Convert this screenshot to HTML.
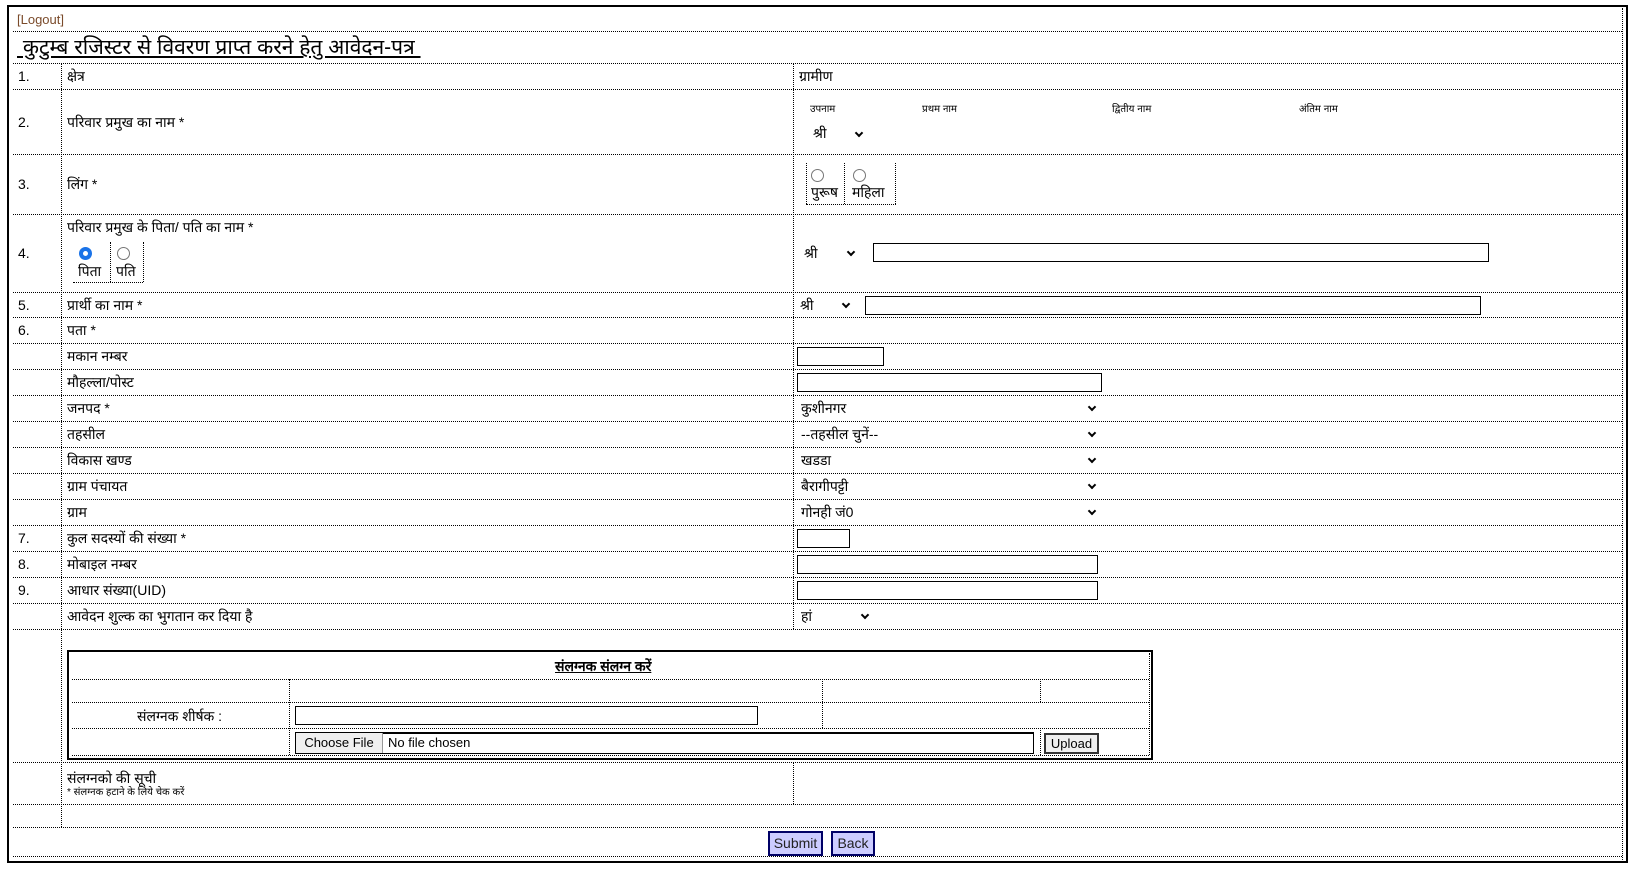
<!DOCTYPE html>
<html><head><meta charset="utf-8">
<style>
*{margin:0;padding:0;box-sizing:border-box}
body{width:1638px;height:869px;background:#fff;font-family:"Liberation Sans","Noto Sans CJK SC",sans-serif;font-size:14px;color:#000;position:relative;overflow:hidden}
.a{position:absolute;white-space:nowrap}
.h{position:absolute;border-top:1px dotted #000;height:0}
.v{position:absolute;border-left:1px dotted #000;width:0}
.t{position:absolute;white-space:nowrap;line-height:18px}
.inp{position:absolute;border:1px solid #000;background:#fff}
.chev{position:absolute;width:6px;height:6px;border-right:2px solid #000;border-bottom:2px solid #000;transform:rotate(45deg);margin-top:2px}
.rad{position:absolute;width:13px;height:13px;border:1px solid #777;border-radius:50%;background:#fff}
.btn{position:absolute;background:#ccccff;border:2px solid #000066;font-size:14px;text-align:center;line-height:20px;color:#222}
</style></head><body>
<div class="a" style="left:7px;top:5px;width:1621px;height:858px;border:2px solid #000"></div>
<div class="v" style="left:1622px;top:8px;height:852px"></div>
<div class="t" style="left:17px;top:11px;font-size:13px;color:#7a4a2a">[Logout]</div>
<div class="t" style="left:17px;top:35px;font-size:21px;line-height:26px;text-decoration:underline">&nbsp;कुटुम्ब रजिस्टर से विवरण प्राप्त करने हेतु आवेदन-पत्र&nbsp;</div>

<div class="h" style="left:13px;width:1609px;top:31px"></div>
<div class="h" style="left:13px;width:1609px;top:63px"></div>
<div class="h" style="left:13px;width:1609px;top:89px"></div>
<div class="h" style="left:13px;width:1609px;top:154px"></div>
<div class="h" style="left:13px;width:1609px;top:214px"></div>
<div class="h" style="left:13px;width:1609px;top:292px"></div>
<div class="h" style="left:13px;width:1609px;top:317px"></div>
<div class="h" style="left:13px;width:1609px;top:343px"></div>
<div class="h" style="left:13px;width:1609px;top:369px"></div>
<div class="h" style="left:13px;width:1609px;top:395px"></div>
<div class="h" style="left:13px;width:1609px;top:421px"></div>
<div class="h" style="left:13px;width:1609px;top:447px"></div>
<div class="h" style="left:13px;width:1609px;top:473px"></div>
<div class="h" style="left:13px;width:1609px;top:499px"></div>
<div class="h" style="left:13px;width:1609px;top:525px"></div>
<div class="h" style="left:13px;width:1609px;top:551px"></div>
<div class="h" style="left:13px;width:1609px;top:577px"></div>
<div class="h" style="left:13px;width:1609px;top:603px"></div>
<div class="h" style="left:13px;width:1609px;top:629px"></div>
<div class="h" style="left:13px;width:1609px;top:762px"></div>
<div class="h" style="left:13px;width:1609px;top:804px"></div>
<div class="h" style="left:13px;width:1609px;top:827px"></div>
<div class="h" style="left:13px;width:1609px;top:856px"></div>
<div class="v" style="left:61px;top:63px;height:764px"></div>
<div class="v" style="left:793px;top:63px;height:566px"></div>
<div class="v" style="left:793px;top:762px;height:42px"></div>

<div class="t" style="left:18px;top:67px">1.</div>
<div class="t" style="left:18px;top:113px">2.</div>
<div class="t" style="left:18px;top:175px">3.</div>
<div class="t" style="left:18px;top:244px">4.</div>
<div class="t" style="left:18px;top:296px">5.</div>
<div class="t" style="left:18px;top:321px">6.</div>
<div class="t" style="left:18px;top:529px">7.</div>
<div class="t" style="left:18px;top:555px">8.</div>
<div class="t" style="left:18px;top:581px">9.</div>

<div class="t" style="left:67px;top:67px">क्षेत्र</div>
<div class="t" style="left:67px;top:113px">परिवार प्रमुख का नाम *</div>
<div class="t" style="left:67px;top:175px">लिंग *</div>
<div class="t" style="left:67px;top:218px">परिवार प्रमुख के पिता/ पति का नाम *</div>
<div class="t" style="left:67px;top:296px">प्रार्थी का नाम *</div>
<div class="t" style="left:67px;top:321px">पता *</div>
<div class="t" style="left:67px;top:347px">मकान नम्बर</div>
<div class="t" style="left:67px;top:373px">मौहल्ला/पोस्ट</div>
<div class="t" style="left:67px;top:399px">जनपद *</div>
<div class="t" style="left:67px;top:425px">तहसील</div>
<div class="t" style="left:67px;top:451px">विकास खण्ड</div>
<div class="t" style="left:67px;top:477px">ग्राम पंचायत</div>
<div class="t" style="left:67px;top:503px">ग्राम</div>
<div class="t" style="left:67px;top:529px">कुल सदस्यों की संख्या *</div>
<div class="t" style="left:67px;top:555px">मोबाइल नम्बर</div>
<div class="t" style="left:67px;top:581px">आधार संख्या(UID)</div>
<div class="t" style="left:67px;top:607px">आवेदन शुल्क का भुगतान कर दिया है</div>

<div class="h" style="left:73px;width:70px;top:282px"></div>
<div class="v" style="left:110px;top:242px;height:40px"></div>
<div class="v" style="left:143px;top:242px;height:40px"></div>
<div class="rad" style="left:79px;top:247px;border:4px solid #1a73e8"></div>
<div class="rad" style="left:117px;top:247px"></div>
<div class="t" style="left:78px;top:262px">पिता</div>
<div class="t" style="left:116px;top:262px">पति</div>

<div class="t" style="left:799px;top:67px">ग्रामीण</div>
<div class="t" style="left:810px;top:101px;font-size:10px">उपनाम</div>
<div class="t" style="left:922px;top:101px;font-size:10px">प्रथम नाम</div>
<div class="t" style="left:1112px;top:101px;font-size:10px">द्वितीय नाम</div>
<div class="t" style="left:1299px;top:101px;font-size:10px">अंतिम नाम</div>
<div class="t" style="left:813px;top:124px">श्री</div>
<div class="chev" style="left:856px;top:128px"></div>

<div class="h" style="left:806px;width:90px;top:204px"></div>
<div class="v" style="left:806px;top:163px;height:41px"></div>
<div class="v" style="left:844px;top:163px;height:41px"></div>
<div class="v" style="left:895px;top:163px;height:41px"></div>
<div class="rad" style="left:811px;top:169px"></div>
<div class="rad" style="left:853px;top:169px"></div>
<div class="t" style="left:811px;top:183px">पुरूष</div>
<div class="t" style="left:852px;top:183px">महिला</div>

<div class="t" style="left:804px;top:244px">श्री</div>
<div class="chev" style="left:848px;top:247px"></div>
<div class="inp" style="left:873px;top:243px;width:616px;height:19px"></div>

<div class="t" style="left:800px;top:296px">श्री</div>
<div class="chev" style="left:843px;top:299px"></div>
<div class="inp" style="left:865px;top:296px;width:616px;height:19px"></div>

<div class="inp" style="left:797px;top:347px;width:87px;height:19px"></div>
<div class="inp" style="left:797px;top:373px;width:305px;height:19px"></div>

<div class="t" style="left:801px;top:399px">कुशीनगर</div><div class="chev" style="left:1089px;top:402px"></div>
<div class="t" style="left:801px;top:425px">--तहसील चुनें--</div><div class="chev" style="left:1089px;top:428px"></div>
<div class="t" style="left:801px;top:451px">खडडा</div><div class="chev" style="left:1089px;top:454px"></div>
<div class="t" style="left:801px;top:477px">बैरागीपट्टी</div><div class="chev" style="left:1089px;top:480px"></div>
<div class="t" style="left:801px;top:503px">गोनही जं0</div><div class="chev" style="left:1089px;top:506px"></div>

<div class="inp" style="left:797px;top:529px;width:53px;height:19px"></div>
<div class="inp" style="left:797px;top:555px;width:301px;height:19px"></div>
<div class="inp" style="left:797px;top:581px;width:301px;height:19px"></div>
<div class="t" style="left:801px;top:607px">हां</div><div class="chev" style="left:862px;top:610px"></div>

<div class="a" style="left:67px;top:650px;width:1086px;height:110px;border:2px solid #000"></div>
<div class="v" style="left:1149px;top:653px;height:102px"></div>
<div class="t" style="left:555px;top:657px;font-weight:bold;text-decoration:underline">संलग्नक संलग्न करें</div>
<div class="h" style="left:72px;width:1077px;top:679px"></div>
<div class="h" style="left:72px;width:1077px;top:702px"></div>
<div class="h" style="left:72px;width:1077px;top:728px"></div>
<div class="h" style="left:72px;width:1077px;top:755px"></div>
<div class="v" style="left:289px;top:679px;height:76px"></div>
<div class="v" style="left:822px;top:679px;height:49px"></div>
<div class="v" style="left:1040px;top:679px;height:23px"></div>
<div class="v" style="left:1040px;top:728px;height:27px"></div>
<div class="t" style="left:137px;top:707px">संलग्नक शीर्षक :</div>
<div class="inp" style="left:295px;top:706px;width:463px;height:19px"></div>
<div class="inp" style="left:295px;top:732px;width:739px;height:22px;border-width:2px 1px 1px 1px"></div>
<div class="a" style="left:296px;top:733px;width:87px;height:20px;background:#efefef;border-right:1px solid #999;font-size:13px;line-height:20px;text-align:center">Choose File</div>
<div class="t" style="left:388px;top:734px;font-size:13px">No file chosen</div>
<div class="a" style="left:1044px;top:733px;width:55px;height:21px;background:#efefef;border:2px solid #333;font-size:13px;line-height:17px;text-align:center">Upload</div>

<div class="t" style="left:67px;top:769px">संलग्नको की सूची</div>
<div class="t" style="left:67px;top:787px;font-size:10px;line-height:12px">* संलग्नक हटाने के लिये चेक करें</div>

<div class="btn" style="left:768px;top:831px;width:55px;height:25px">Submit</div>
<div class="btn" style="left:831px;top:831px;width:44px;height:25px">Back</div>
</body></html>
